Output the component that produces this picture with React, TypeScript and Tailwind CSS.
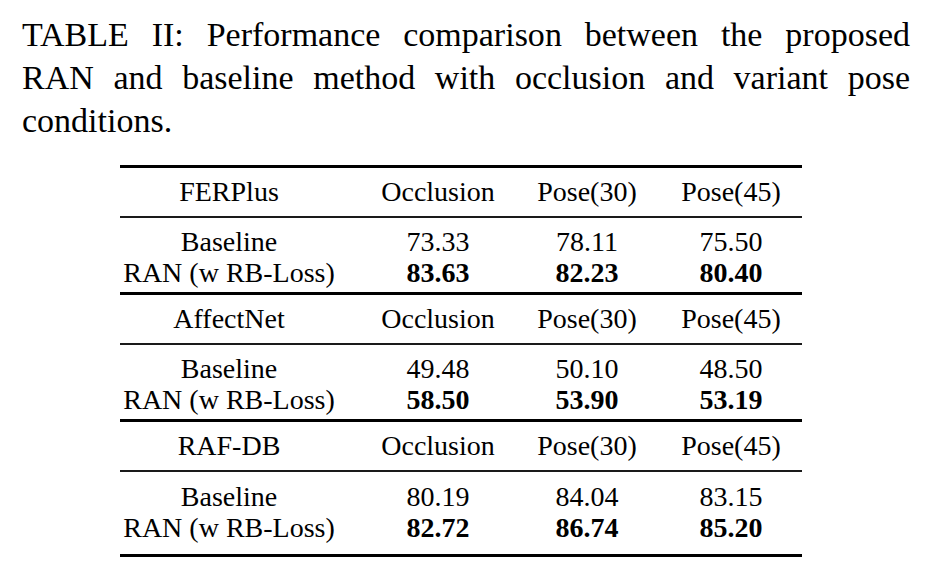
const blocks = [
  {
    dataset: 'FERPlus',
    baseline: ['73.33', '78.11', '75.50'],
    ran: ['83.63', '82.23', '80.40'],
  },
  {
    dataset: 'AffectNet',
    baseline: ['49.48', '50.10', '48.50'],
    ran: ['58.50', '53.90', '53.19'],
  },
  {
    dataset: 'RAF-DB',
    baseline: ['80.19', '84.04', '83.15'],
    ran: ['82.72', '86.74', '85.20'],
  },
];

const conditions = ['Occlusion', 'Pose(30)', 'Pose(45)'];

const grid = 'grid grid-cols-[242px_152px_146px_142px] text-center';

export default function App() {
  return (
    <div className="w-[929px] h-[571px] bg-white text-black font-['Liberation_Serif','Times_New_Roman',serif] overflow-hidden">
      {/* Caption */}
      <div className="pt-[13px] pl-[22px] pr-[19px] text-[34px] leading-[43px]">
        <div className="text-justify [text-align-last:justify]">
          TABLE II: Performance comparison between the proposed
        </div>
        <div className="text-justify [text-align-last:justify]">
          RAN and baseline method with occlusion and variant pose
        </div>
        <div>conditions.</div>
      </div>

      {/* Table */}
      <div className="mt-[23px] ml-[120px] w-[682px] text-[28px] border-b-[3px] border-black">
        {blocks.map((b, i) => (
          <div key={b.dataset} className="border-t-[3px] border-black">
            <div className={`${grid} h-[50px] items-center border-b-2 border-[#1a1a1a]`}>
              <div className="pr-[24px]">{b.dataset}</div>
              {conditions.map((c) => (
                <div key={c}>{c}</div>
              ))}
            </div>
            <div className={i === blocks.length - 1 ? 'pt-[9px] pb-[11px] leading-[31px]' : 'pt-[8px] pb-[4px] leading-[31px]'}>
              <div className={grid}>
                <div className="pr-[24px]">Baseline</div>
                {b.baseline.map((v, j) => (
                  <div key={j}>{v}</div>
                ))}
              </div>
              <div className={grid}>
                <div className="pr-[24px] whitespace-nowrap">RAN (w RB-Loss)</div>
                {b.ran.map((v, j) => (
                  <div key={j} className="font-bold">
                    {v}
                  </div>
                ))}
              </div>
            </div>
          </div>
        ))}
      </div>
    </div>
  );
}
